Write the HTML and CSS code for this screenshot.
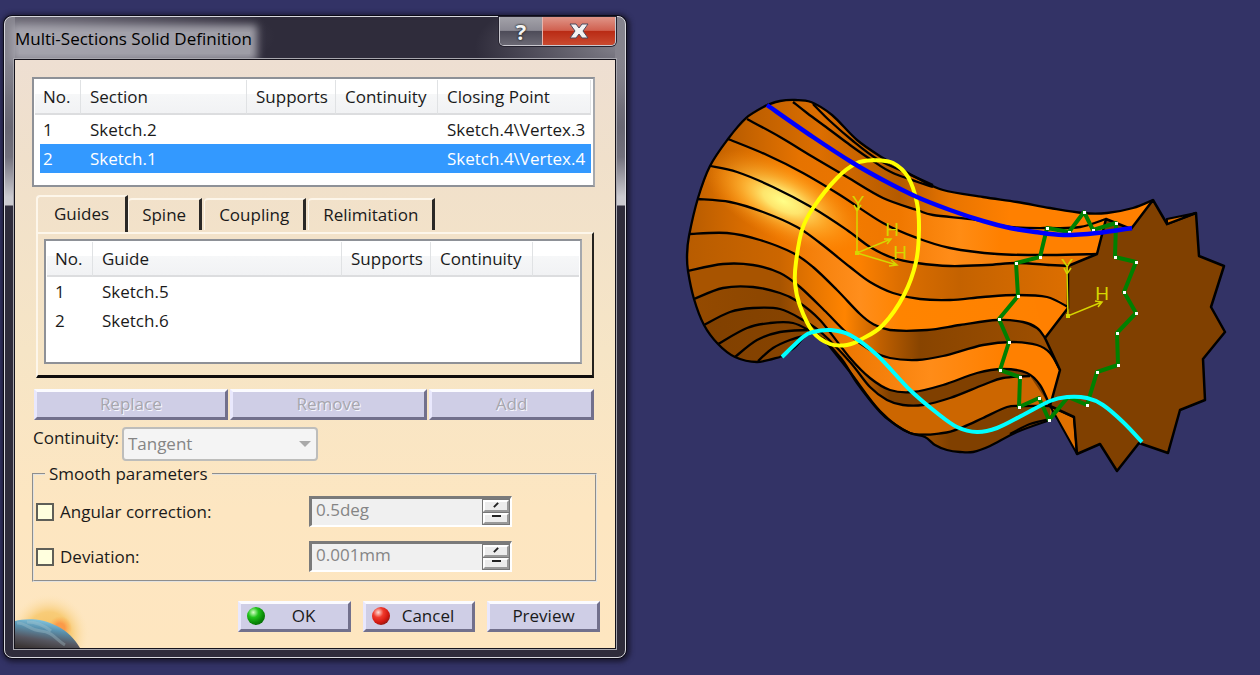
FILE: index.html
```html
<!DOCTYPE html>
<html lang="en">
<head>
  <meta charset="UTF-8">
  <title>Multi-Sections Solid Definition</title>
  <link rel="stylesheet" href="styles.css">
</head>
<body>

  <div class="workspace">
    <section class="dialog">
      <header class="titlebar">
        <h1 class="title">Multi-Sections Solid Definition</h1>
        <div class="window-buttons">
          <button class="help" aria-label="Help">?</button>
          <button class="close" aria-label="Close">
            <svg width="20" height="18" viewBox="0 0 20 18">
              <path d="M1 2h6l3 4 3-4h6l-5 7 5 7h-6l-3-4-3 4H1l5-7z" fill="#f2f2f2" stroke="#4d4a5c" stroke-width="1"/>
            </svg>
          </button>
        </div>
      </header>

      <form class="client">
        <div class="list sections">
          <table>
            <thead>
              <tr><th class="no">No.</th><th class="name">Section</th><th class="supports">Supports</th><th class="continuity">Continuity</th><th>Closing Point</th></tr>
            </thead>
            <tbody>
              <tr><td>1</td><td>Sketch.2</td><td></td><td></td><td>Sketch.4\Vertex.3</td></tr>
              <tr class="selected"><td>2</td><td>Sketch.1</td><td></td><td></td><td>Sketch.4\Vertex.4</td></tr>
            </tbody>
          </table>
        </div>

        <div class="tabs">
          <button type="button" class="tab active">Guides</button>
          <button type="button" class="tab">Spine</button>
          <button type="button" class="tab">Coupling</button>
          <button type="button" class="tab">Relimitation</button>
        </div>
        <div class="panel">
          <div class="list guides">
            <table>
              <thead>
                <tr><th class="no">No.</th><th class="guide">Guide</th><th class="supports">Supports</th><th class="continuity">Continuity</th><th></th></tr>
              </thead>
              <tbody>
                <tr><td>1</td><td>Sketch.5</td><td></td><td></td><td></td></tr>
                <tr><td>2</td><td>Sketch.6</td><td></td><td></td><td></td></tr>
              </tbody>
            </table>
          </div>
        </div>

        <div class="actions">
          <button type="button" class="btn" disabled>Replace</button>
          <button type="button" class="btn" disabled>Remove</button>
          <button type="button" class="btn" disabled>Add</button>
        </div>

        <div class="continuity-row">
          <label for="continuity">Continuity:</label>
          <div class="select">
            <select id="continuity" disabled><option>Tangent</option></select>
          </div>
        </div>

        <fieldset class="smooth">
          <legend>Smooth parameters</legend>
          <div class="param">
            <input type="checkbox" id="angular">
            <label for="angular">Angular correction:</label>
            <div class="spin">
              <input type="text" value="0.5deg" aria-label="Angular correction value" disabled>
              <div class="spin-buttons">
                <button type="button" class="up" aria-label="Increase" disabled></button>
                <button type="button" class="down" aria-label="Decrease" disabled></button>
              </div>
            </div>
          </div>
          <div class="param">
            <input type="checkbox" id="deviation">
            <label for="deviation">Deviation:</label>
            <div class="spin">
              <input type="text" value="0.001mm" aria-label="Deviation value" disabled>
              <div class="spin-buttons">
                <button type="button" class="up" aria-label="Increase" disabled></button>
                <button type="button" class="down" aria-label="Decrease" disabled></button>
              </div>
            </div>
          </div>
        </fieldset>

        <div class="footer">
          <button type="button" class="btn with-ball"><span class="ball green"></span><span>OK</span></button>
          <button type="button" class="btn with-ball"><span class="ball red"></span><span>Cancel</span></button>
          <button type="button" class="btn">Preview</button>
        </div>

        <svg class="planet" width="74" height="56" viewBox="0 0 74 56">
          <defs>
            <radialGradient id="glow" gradientUnits="userSpaceOnUse" cx="34" cy="42" r="40">
              <stop offset="0" stop-color="#f6c060"/>
              <stop offset="0.55" stop-color="#f8cc78"/>
              <stop offset="1" stop-color="#fde4b8" stop-opacity="0"/>
            </radialGradient>
            <radialGradient id="sun">
              <stop offset="0.4" stop-color="#fb9a48"/>
              <stop offset="1" stop-color="#fbb050" stop-opacity="0"/>
            </radialGradient>
            <linearGradient id="earth" x1="0.6" y1="0" x2="0.25" y2="1">
              <stop offset="0" stop-color="#8fd4ec"/>
              <stop offset="0.35" stop-color="#5a93b0"/>
              <stop offset="0.7" stop-color="#565660"/>
              <stop offset="1" stop-color="#3c3636"/>
            </linearGradient>
          </defs>
          <rect width="74" height="56" fill="url(#glow)"/>
          <circle cx="45" cy="36" r="12" fill="url(#sun)"/>
          <path d="M0 29C10 26 28 26 42 34C52 39 60 47 65 56H0z" fill="url(#earth)"/>
          <path d="M2 31c10 0 12 7 24 8s14 8 24 14M12 30c10 0 18 4 24 9" fill="none" stroke="#a9c6cf" stroke-width="3" opacity=".35"/>
        </svg>
      </form>
    </section>

    <svg class="viewport" id="viewport" viewBox="632 0 628 675" preserveAspectRatio="xMinYMin meet">
      <defs>
        <radialGradient id="highlight">
          <stop offset="0" stop-color="#ffff88"/>
          <stop offset="0.25" stop-color="#fff078" stop-opacity="0.9"/>
          <stop offset="0.55" stop-color="#ffc040" stop-opacity="0.6"/>
          <stop offset="1" stop-color="#ff9010" stop-opacity="0"/>
        </radialGradient>
      </defs>
    </svg>
  </div>

  <script src="model.js"></script>
</body>
</html>
```

FILE: styles.css
```css
* { box-sizing: border-box; }
html, body { margin: 0; height: 100%; }
body {
  background: #333366; color: #1a1a1a; overflow: hidden;
  font-family: 'Segoe UI', 'Open Sans', 'Noto Sans', sans-serif;
  font-size: 17px; line-height: 22px;
}
button, input, select { font: inherit; color: inherit; margin: 0; }

.workspace { display: flex; align-items: flex-start; min-height: 100%; }
.viewport { flex: 1; min-width: 0; display: block; }

/* window frame */
.dialog {
  width: 622px; flex: none; margin: 16px 6px 18px 4px; padding: 0 10px 9px;
  border: 1px solid #d8d8de; border-radius: 8px;
  box-shadow: 0 0 0 1px #0c0b18, 1px 1px 5px 3px #1b1932;
  background:
    radial-gradient(ellipse 150px 60px at 100% 30px, #85838d, rgba(133, 131, 141, 0)) no-repeat,
    radial-gradient(ellipse 270px 60px at 0 20px, #85838d, rgba(133, 131, 141, 0)) no-repeat,
    linear-gradient(#85838d 40px, #686672 110px, #72707c 140px, #cbcad0 180px, #cbcad0 188px, #2f2c3b 189px) 0 0 / 10px 100% no-repeat,
    linear-gradient(#85838d 40px, #686672 110px, #72707c 140px, #cbcad0 180px, #cbcad0 188px, #2f2c3b 189px) 100% 0 / 10px 100% no-repeat,
    #2f2c3b;
}
.titlebar { display: flex; justify-content: space-between; height: 42px; }
.title {
  position: relative; margin: 10px 0 0; z-index: 0;
  font-size: 17px; font-weight: normal; line-height: 24px; color: #000; white-space: nowrap;
}
.title::before {
  content: ""; position: absolute; inset: 5px 2px 5px 4px; z-index: -1;
  background: rgba(170, 169, 177, 0.9); box-shadow: 0 0 8px 7px rgba(170, 169, 177, 0.9);
}
.window-buttons {
  display: flex; height: 29px; margin-right: -1px; border: 1px solid #c9c8cf; border-top: 0;
  border-radius: 0 0 5px 5px; overflow: hidden; box-shadow: 0 0 0 1px #25222f;
}
.window-buttons button { border: 0; padding: 0; display: flex; align-items: center; justify-content: center; }
.help {
  width: 42px; color: #f4f4f4; font-size: 22px; font-weight: bold;
  text-shadow: 0 0 2px #222, 0 0 2px #222;
  background: linear-gradient(#a3a2a9, #8b8993 48%, #4d4b58 50%, #6b6974);
}
.close {
  width: 73px;
  background: linear-gradient(#e09588, #d0604f 48%, #b92a14 50%, #c94a30);
}
.window-buttons .close { border-left: 1px solid #e7b5ad; }

.client {
  position: relative; padding: 17px 20px 16px 17px; overflow: hidden;
  outline: 1px solid #15131c; box-shadow: 0 0 0 2px #a8a7ae;
  background: linear-gradient(#eedfd2, #f0e0cb 100px, #f6e5c6 290px, #fde6c1 450px, #fee6c0);
  margin-top: 1px;
}

/* list views */
.list { background: #fff; border: 2px solid #8e9197; border-right-color: #a5a8ad; padding: 1px; }
.sections { height: 110px; padding-right: 2px; }
.guides { height: 125px; }
.list table { width: 100%; table-layout: fixed; border-collapse: separate; border-spacing: 0; }
.list th, .list td { text-align: left; font-weight: normal; white-space: nowrap; }
.list th {
  height: 35px; padding: 0 0 0 9px;
  border-right: 1px solid #e0e2e4; border-bottom: 2px solid #dcdddf;
  background: linear-gradient(#fff 42%, #f6f7f8 43%, #f1f2f4);
}
.list th.no { width: 46px; padding-left: 8px; }
.list th.name { width: 166px; }
.list th.guide { width: 249px; }
.list th.supports { width: 89px; }
.list th.continuity { width: 102px; }
.guides th:last-child { border-right: 0; }
.list td { height: 29px; padding: 0 0 0 9px; }
.list td:first-child { padding-left: 3px; border-left: 5px solid #fff; }
.selected td { background: #3399ff; color: #fff; }

/* tabs */
.tabs { display: flex; align-items: flex-start; height: 37px; margin: 8px 1px 0 4px; }
.tab {
  height: 32px; margin-top: 3px; padding: 0 14px 1px; background: none;
  border: 2px solid #fdf6ea; border-right: 3px solid #2a2826; border-bottom: 0;
  border-radius: 4px 0 0 0;
}
.tab.active { height: 37px; margin-top: 0; padding: 0 16px 1px; }
.tab + .tab { border-left-width: 1px; }
.tab + .tab + .tab { margin-left: 2px; }
.tab.active + .tab { padding: 0 13px 1px; }
.panel {
  margin: 0 1px 0 4px; padding: 5px 10px 11px 6px;
  border: 2px solid #fdf6ea; border-right: 2px solid #25221e; border-bottom: 3px solid #100e0c;
}

/* bevelled buttons */
.btn {
  height: 31px; padding: 0 0 1px; background: #cfcee6;
  border: 3px solid; border-color: #fbfbff #72708c #72708c #e9e8fd;
  display: flex; align-items: center; justify-content: center;
}
.btn:disabled { color: #a7a6ad; text-shadow: 1px 1px 0 #f8f8ff; }
.actions { display: grid; grid-template-columns: 194fr 198fr 165fr; gap: 2px; margin: 11px 1px 0 2px; }

.continuity-row { display: flex; align-items: flex-start; gap: 3px; margin: 7px 0 0 1px; }
.select { position: relative; width: 196px; }
.select select {
  width: 100%; height: 34px; padding: 0 4px; appearance: none; opacity: 1;
  background: #f4f4f4; color: #858585; border: 2px solid #bdbdbb; border-radius: 4px;
}
.select::after {
  content: ""; position: absolute; right: 7px; top: 14px;
  border: 6px solid transparent; border-top-color: #a9a9a9; border-bottom: 0;
}

.smooth {
  margin: 2px -2px 0 0; padding: 11px 0 8px 2px; min-width: 0;
  border: 2px groove #e2e2e0; display: flex; flex-direction: column; gap: 14px;
}
.smooth legend { margin-left: 9px; padding: 0 4px; height: 22px; }
.param { display: flex; align-items: center; gap: 6px; height: 31px; }
.param > label { width: 243px; }
.param input[type="checkbox"] {
  appearance: none; width: 18px; height: 18px; background: #ffffde; border: 2px solid #5f5f58;
}
.spin {
  display: flex; width: 203px; height: 31px; background: #f0f0f0;
  border: solid; border-width: 3px 2px 2px 3px; border-color: #7a7a7a #fff #fff #7a7a7a;
}
.spin input { flex: 1; min-width: 0; border: 0; padding: 0 0 4px 4px; background: none; color: #858585; }
.spin-buttons { display: flex; flex-direction: column; width: 28px; background: #777; padding: 1px; gap: 1px; }
.spin-buttons button {
  flex: 1; padding: 0; display: flex; align-items: flex-start; justify-content: center;
  background: #ececec; border: 2px solid; border-color: #fff #999 #999 #fff;
}
.spin-buttons button::before { content: ""; width: 9px; height: 2px; background: #222; }
.spin-buttons .up::before { width: 6px; margin-top: 2px; transform: rotate(-45deg); }

.footer { display: grid; grid-template-columns: 113px 112px 113px; gap: 12px; justify-content: end; margin: 19px -5px 0 0; }
.with-ball { display: grid; grid-template-columns: 30px 1fr; padding-right: 12px; }
.with-ball span:last-child { text-align: center; }
.ball { width: 18px; height: 18px; margin-left: 6px; border-radius: 50%; }
.green { background: radial-gradient(circle at 35% 30%, #d8ffc8, #22c41c 30%, #0a8a08 60%, #024a02); }
.red { background: radial-gradient(circle at 35% 30%, #ffe0d8, #f03a2c 30%, #d01810 60%, #3c1c18); }

.planet { position: absolute; left: 0; bottom: 0; }

/* 3D view */
.edge { fill: none; stroke: #000; stroke-width: 2.3; stroke-linejoin: round; }
.face { fill: #804000; stroke: #000; stroke-width: 2.5; stroke-linejoin: round; }
.rim { fill: #e07000; stroke: #000; stroke-width: 2; }
.curve { fill: none; stroke-width: 4; stroke-linejoin: round; }
.spine-section { stroke: #ffff00; }
.guide-top { stroke: #0000ff; stroke-width: 4.5; }
.guide-bottom { stroke: #00ffff; }
.profile { stroke: #008000; }
.vertex { fill: #fff; }
.axis { fill: none; stroke: #d6d600; stroke-width: 1.5; }
.axis-label { fill: #d6d600; font: 19px 'Liberation Sans', sans-serif; text-anchor: middle; }
```

FILE: model.js
```js
const view = document.getElementById("viewport");
const defs = view.querySelector("defs");

function add(tag, attrs, parent = view) {
  const el = document.createElementNS("http://www.w3.org/2000/svg", tag);
  for (const key in attrs) el.setAttribute(key, attrs[key]);
  parent.appendChild(el);
  return el;
}

// cubic segments running through every point
function segments(p) {
  let d = "";
  for (let i = 0; i < p.length - 1; i++) {
    const a = p[i - 1] || p[i], b = p[i], c = p[i + 1], e = p[i + 2] || c;
    d += `C${b[0] + (c[0] - a[0]) / 6} ${b[1] + (c[1] - a[1]) / 6} ${c[0] - (e[0] - b[0]) / 6} ${c[1] - (e[1] - b[1]) / 6} ${c[0]} ${c[1]}`;
  }
  return d;
}
const smooth = p => `M${p[0]}` + segments(p);
const poly = p => "M" + p.join("L") + "Z";

const top0 = [[767,105],[780,101],[795,100],[811,102],[832,115],[857,140],[883,158],[917,178],[943,190],[983,197],[1017,202],[1050,208],[1083,213],[1107,213],[1133,208],[1153,200]];
const left0 = [[767,105],[746,118],[728,139],[710,166],[698,198],[689,236],[687,255],[688,271],[694,299],[704,325],[718,344],[735,357],[757,362],[780,357]];
const bottom0 = [[780,357],[794,348],[813,333],[840,357],[857,383],[880,412],[893,423],[910,433],[925,437],[935,445],[947,450],[960,452],[973,452],[990,446],[1017,432],[1050,420]];

const ribs = [
  [[747,119],[780,137],[813,157],[847,177],[883,198],[917,210],[933,215],[977,220],[1010,227],[1050,228],[1080,227],[1106,219]],
  [[728,139],[767,155],[803,173],[840,195],[883,223],[917,238],[950,248],[997,254],[1050,255],[1097,254]],
  [[710,166],[737,172],[773,187],[813,208],[847,230],[870,247],[893,258],[917,263],[950,266],[987,265],[1017,263],[1050,265],[1070,266]],
  [[698,199],[730,202],[763,212],[797,227],[820,243],[850,267],[870,282],[893,293],[920,299],[950,300],[983,297],[1017,295],[1047,297],[1068,307]],
  [[689,234],[727,233],[760,240],[793,253],[813,267],[837,290],[860,314],[873,324],[890,330],[927,330],[960,325],[997,320],[1023,322],[1037,328],[1045,338]],
  [[688,271],[723,264],[753,265],[780,273],[800,287],[827,313],[847,333],[870,350],[890,358],[917,360],[943,356],[983,345],[1013,342],[1037,345],[1050,353],[1060,370]],
  [[694,299],[723,288],[753,287],[780,293],[797,301],[820,320],[850,358],[870,378],[890,390],[913,392],[943,385],[977,373],[1003,369],[1027,373],[1040,385],[1050,406]],
  [[704,325],[730,312],[753,308],[780,309],[803,320],[823,334],[850,362],[870,387],[887,400],[903,405],[923,405],[950,398],[983,385],[1003,378],[1030,376]],
];
const lower = [[823,338],[850,372],[880,411],[910,433],[943,433],[963,427],[983,418],[1007,407],[1023,406],[1050,406]];

// colour stops [x, colour] of the strip under each rib
const shades = [
  [[730,"#b85c00"],[800,"#e67300"],[900,"#f07800"],[960,"#ff8c14"],[1000,"#ff8000"]],
  [[710,"#c06000"],[790,"#f88000"],[880,"#f07800"],[950,"#ff8c18"],[1060,"#e87400"]],
  [[695,"#c06000"],[750,"#f88000"],[860,"#fc8000"],[900,"#dc6e00"],[960,"#c46200"],[1068,"#dc6e00"]],
  [[690,"#b85c00"],[780,"#ee7700"],[860,"#ff8e1c"],[900,"#ff8400"],[1068,"#ff8000"]],
  [[688,"#b85c00"],[780,"#cc6600"],[845,"#ff8400"],[880,"#c06000"],[920,"#884400"],[1060,"#a05000"]],
  [[690,"#a85400"],[780,"#a85400"],[840,"#ec7600"],[930,"#ff8c18"],[1000,"#ff8000"]],
  [[694,"#944a00"],[780,"#8c4600"],[850,"#e07000"],[890,"#804000"],[1040,"#804000"]],
];

function gradient(id, stops) {
  const x1 = stops[0][0], x2 = stops[stops.length - 1][0];
  const g = add("linearGradient", { id, gradientUnits: "userSpaceOnUse", x1, x2, y1: 0, y2: 0 }, defs);
  stops.forEach(([x, color]) => add("stop", { offset: (x - x1) / (x2 - x1), "stop-color": color }, g));
  return `url(#${id})`;
}
function strip(a, b, fill) {
  const back = [...b].reverse();
  add("path", { d: smooth(a) + "L" + back[0] + segments(back) + "Z", fill });
}

// solid body
const inner = [[1153,200],[1131,229],[1106,219],[1097,254],[1070,266],[1068,307],[1045,338],[1060,370],[1050,420]];
const outline = smooth(left0) + segments(bottom0) + "L" + [...inner].reverse().join("L") + segments([...top0].reverse()) + "Z";
add("path", { d: outline, fill: gradient("base", [[690,"#804000"],[820,"#884400"],[850,"#cc6600"],[1040,"#cc6600"]]) });
strip(top0, [[767,105],...ribs[0],[1131,229],[1153,200]], gradient("top", [[750,"#bc5e00"],[820,"#dc6e00"],[900,"#b45a00"],[950,"#e87400"],[1010,"#ff8000"]]));
shades.forEach((stops, i) => strip(ribs[i], ribs[i + 1], gradient("strip" + i, stops)));
strip(lower.slice(3), bottom0.slice(7), gradient("under", [[910,"#b05800"],[950,"#804000"],[1050,"#804000"]]));
add("path", { d: "M1045 338L1068 308L1060 300L1035 300Z", fill: "#ff8000" });

const clip = add("clipPath", { id: "body" }, defs);
add("path", { d: outline }, clip);
const shine = add("g", { "clip-path": "url(#body)" });
add("ellipse", { cx: 783, cy: 201, rx: 86, ry: 38, transform: "rotate(26 783 201)", fill: "url(#highlight)" }, shine);

[top0, left0, bottom0, ...ribs, lower,
  [[793,102],[807,113],[830,130],[850,145],[870,159],[893,173],[933,187]],
  [[813,104],[830,121],[853,141],[877,159],[900,170],[933,185]],
  [[718,344],[747,328],[770,323],[793,323],[812,332]],
  [[735,357],[757,340],[780,332],[807,330]],
  [[758,361],[773,348],[790,340],[810,334]],
  [[1010,434],[1030,424],[1050,419]],
].forEach(p => add("path", { class: "edge", d: smooth(p) }));

// end face
add("path", { class: "rim", d: poly([[1050,406],[1058,420],[1077,454],[1074,417]]) });
add("path", { class: "face", d: poly([[1153,200],[1167,224],[1196,213],[1199,256],[1224,266],[1211,307],[1225,332],[1203,359],[1205,400],[1180,410],[1168,453],[1139,443],[1117,471],[1100,444],[1077,454],[1074,417],[1050,406],[1060,370],[1045,338],[1068,308],[1068,266],[1097,254],[1106,219],[1131,229]]) });
add("path", { class: "rim", d: poly([[1167,219],[1196,213],[1167,224]]) });

// closed profile with its vertices
const profile = [[1047,228],[1040,257],[1016,263],[1018,296],[999,319],[1009,342],[1000,370],[1020,377],[1019,407],[1039,398],[1049,420],[1068,397],[1087,405],[1097,372],[1118,365],[1117,333],[1136,313],[1124,292],[1136,262],[1115,257],[1116,223],[1093,230],[1084,212],[1069,232]];
add("path", { class: "curve profile", d: poly(profile) });
profile.forEach(([x, y]) => add("rect", { class: "vertex", x: x - 1, y: y - 1, width: 3, height: 3 }));

const ring = [[875,160],[857,163],[837,178],[813,208],[802,230],[796,262],[795,283],[800,306],[813,332],[830,344],[847,345],[862,339],[883,325],[904,295],[916,262],[919,230],[917,203],[908,177],[893,163],[875,160]];
add("path", { class: "curve spine-section", d: smooth(ring) });
add("path", { class: "curve guide-top", d: smooth([[767,105],[813,137],[853,163],[883,180],[917,197],[950,210],[983,221],[1010,228],[1035,232],[1063,235],[1097,233],[1132,228]]) });
add("path", { class: "curve guide-bottom", d: smooth([[782,357],[803,337],[813,332],[830,330],[850,335],[877,355],[910,390],[937,413],[957,427],[977,432],[997,428],[1023,415],[1050,401],[1067,397],[1087,398],[1103,405],[1123,422],[1142,442]]) });

// sketch axes
add("path", { class: "axis", d: "M857 208V253L891 239M884 239l7 0-4 5M857 253L897 265M891 260l6 5-8 1M1067 272L1068 316L1102 302M1095 301l7 1-4 5M1064 268l3 6 4-6M854 205l3 6 4-6" });
[[857,253],[1068,316]].forEach(([x, y]) => add("rect", { x: x - 2, y: y - 2, width: 4, height: 4, fill: "#d6d600" }));
[["Y",858,209],["H",892,236],["H",900,259],["Y",1067,272],["H",1102,300]].forEach(([t, x, y]) => {
  add("text", { class: "axis-label", x, y }).textContent = t;
});
```
